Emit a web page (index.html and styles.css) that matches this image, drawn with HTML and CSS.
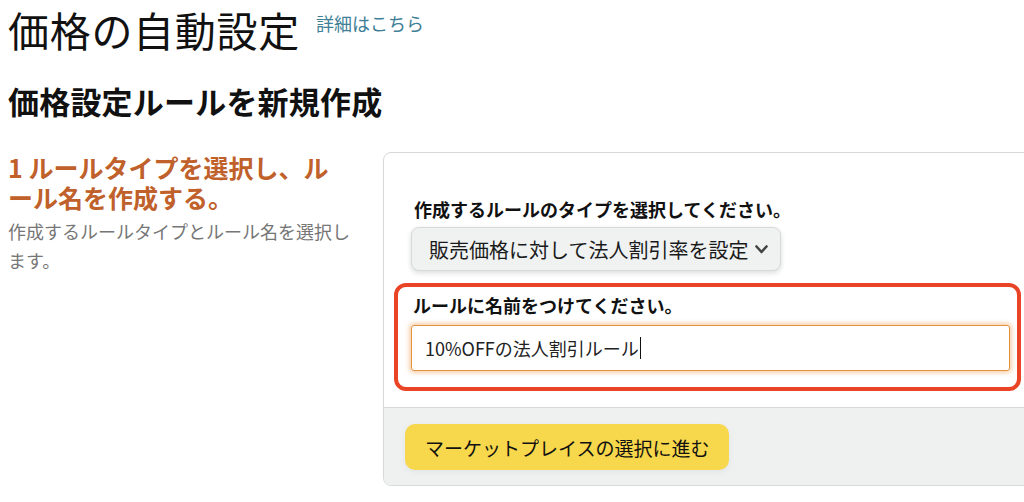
FILE: index.html
```html
<!DOCTYPE html>
<html lang="ja">
<head>
<meta charset="utf-8">
<title>価格の自動設定</title>
<link rel="stylesheet" href="styles.css">
</head>
<body>
<div class="page">
  <header class="header">
    <h1 class="title">価格の自動設定</h1>
    <a class="help-link" href="#">詳細はこちら</a>
  </header>
  <h2 class="subtitle">価格設定ルールを新規作成</h2>
  <div class="main">
    <div class="step">
      <div class="step-title">1 ルールタイプを選択し、ルール名を作成する。</div>
      <div class="step-desc">作成するルールタイプとルール名を選択します。</div>
    </div>
    <div class="card">
      <div class="card-body">
        <div class="field-label">作成するルールのタイプを選択してください。</div>
        <div class="select">
          <span class="select-text">販売価格に対して法人割引率を設定</span>
          <svg class="chevron" width="13" height="9" viewBox="0 0 13 9"><polyline points="1.5,1.5 6.5,7 11.5,1.5" fill="none" stroke="#444" stroke-width="2.6" stroke-linecap="round" stroke-linejoin="round"/></svg>
        </div>
        <div class="highlight">
          <div class="field-label">ルールに名前をつけてください。</div>
          <div class="text-input"><span>10%OFFの法人割引ルール</span><span class="caret"></span></div>
        </div>
      </div>
      <div class="card-footer">
        <button class="primary-btn">マーケットプレイスの選択に進む</button>
      </div>
    </div>
  </div>
</div>
</body>
</html>
```
FILE: styles.css
```css
html, body {
  margin: 0;
  padding: 0;
}
body {
  width: 1024px;
  height: 502px;
  overflow: hidden;
  background: #ffffff;
  color: #0f1111;
  font-family: "Noto Sans CJK JP", "Noto Sans", sans-serif;
}
.page {
  padding-left: 8px;
}
.header {
  display: flex;
  align-items: flex-start;
  gap: 16px;
  padding-top: 4px;
}
.title {
  margin: 0;
  font-size: 41px;
  line-height: 50px;
  font-weight: 400;
  letter-spacing: 0.7px;
  color: #111;
}
.help-link {
  margin-top: 7px;
  font-size: 18px;
  line-height: 24px;
  color: #3f7f97;
  text-decoration: none;
}
.subtitle {
  margin: 27px 0 0 0;
  font-size: 31px;
  line-height: 40px;
  font-weight: 700;
  letter-spacing: 0.2px;
  color: #111;
}
.main {
  display: flex;
  align-items: flex-start;
  gap: 32px;
  margin-top: 31px;
}
.step {
  flex: 0 0 343px;
  line-break: loose;
}
.step-title {
  font-size: 25px;
  line-height: 30px;
  font-weight: 700;
  color: #c0602a;
}
.step-desc {
  margin-top: 5px;
  font-size: 18px;
  line-height: 29px;
  color: #767676;
}
.card {
  flex: 0 0 700px;
  border: 1px solid #d5d9d9;
  border-radius: 8px;
  overflow: hidden;
}
.card-body {
  padding: 44px 0 16px 27px;
}
.field-label {
  margin-left: 3px;
  font-size: 18px;
  line-height: 25px;
  font-weight: 700;
  color: #111;
}
.select {
  display: inline-flex;
  align-items: center;
  box-sizing: border-box;
  height: 44px;
  margin-top: 5px;
  padding: 0 12px 0 17px;
  gap: 7px;
  background: #f0f2f2;
  border: 1px solid #d5d9d9;
  border-radius: 8px;
  box-shadow: 0 2px 5px rgba(15, 17, 17, 0.15);
  font-size: 20px;
  color: #1a1a1a;
}
.chevron {
  display: block;
}
.highlight {
  box-sizing: border-box;
  width: 627px;
  margin: 12px 0 0 -17px;
  padding: 6px 7px 16px 13px;
  border: 4px solid #ea4427;
  border-radius: 12px;
}
.highlight .field-label {
  margin-left: 2px;
  line-height: 24px;
}
.text-input {
  display: flex;
  align-items: center;
  box-sizing: border-box;
  height: 46px;
  margin-top: 8px;
  padding: 0 13px;
  border: 1px solid #e3913f;
  border-radius: 3px;
  box-shadow: 0 0 4px 2px rgba(228, 121, 17, 0.35);
  font-size: 18px;
  color: #222;
}
.caret {
  display: inline-block;
  width: 1px;
  height: 22px;
  margin-left: 1px;
  background: #111;
}
.card-footer {
  padding: 16px 21px 15px;
  background: #eff1f1;
  border-top: 1px solid #d5d9d9;
}
.primary-btn {
  display: block;
  height: 46px;
  padding: 0 20px;
  border: none;
  border-radius: 10px;
  background: #f7d74b;
  box-shadow: 0 2px 5px rgba(213, 217, 217, 0.5);
  font-family: "Noto Sans CJK JP", "Noto Sans", sans-serif;
  font-size: 19px;
  color: #111;
}
```
